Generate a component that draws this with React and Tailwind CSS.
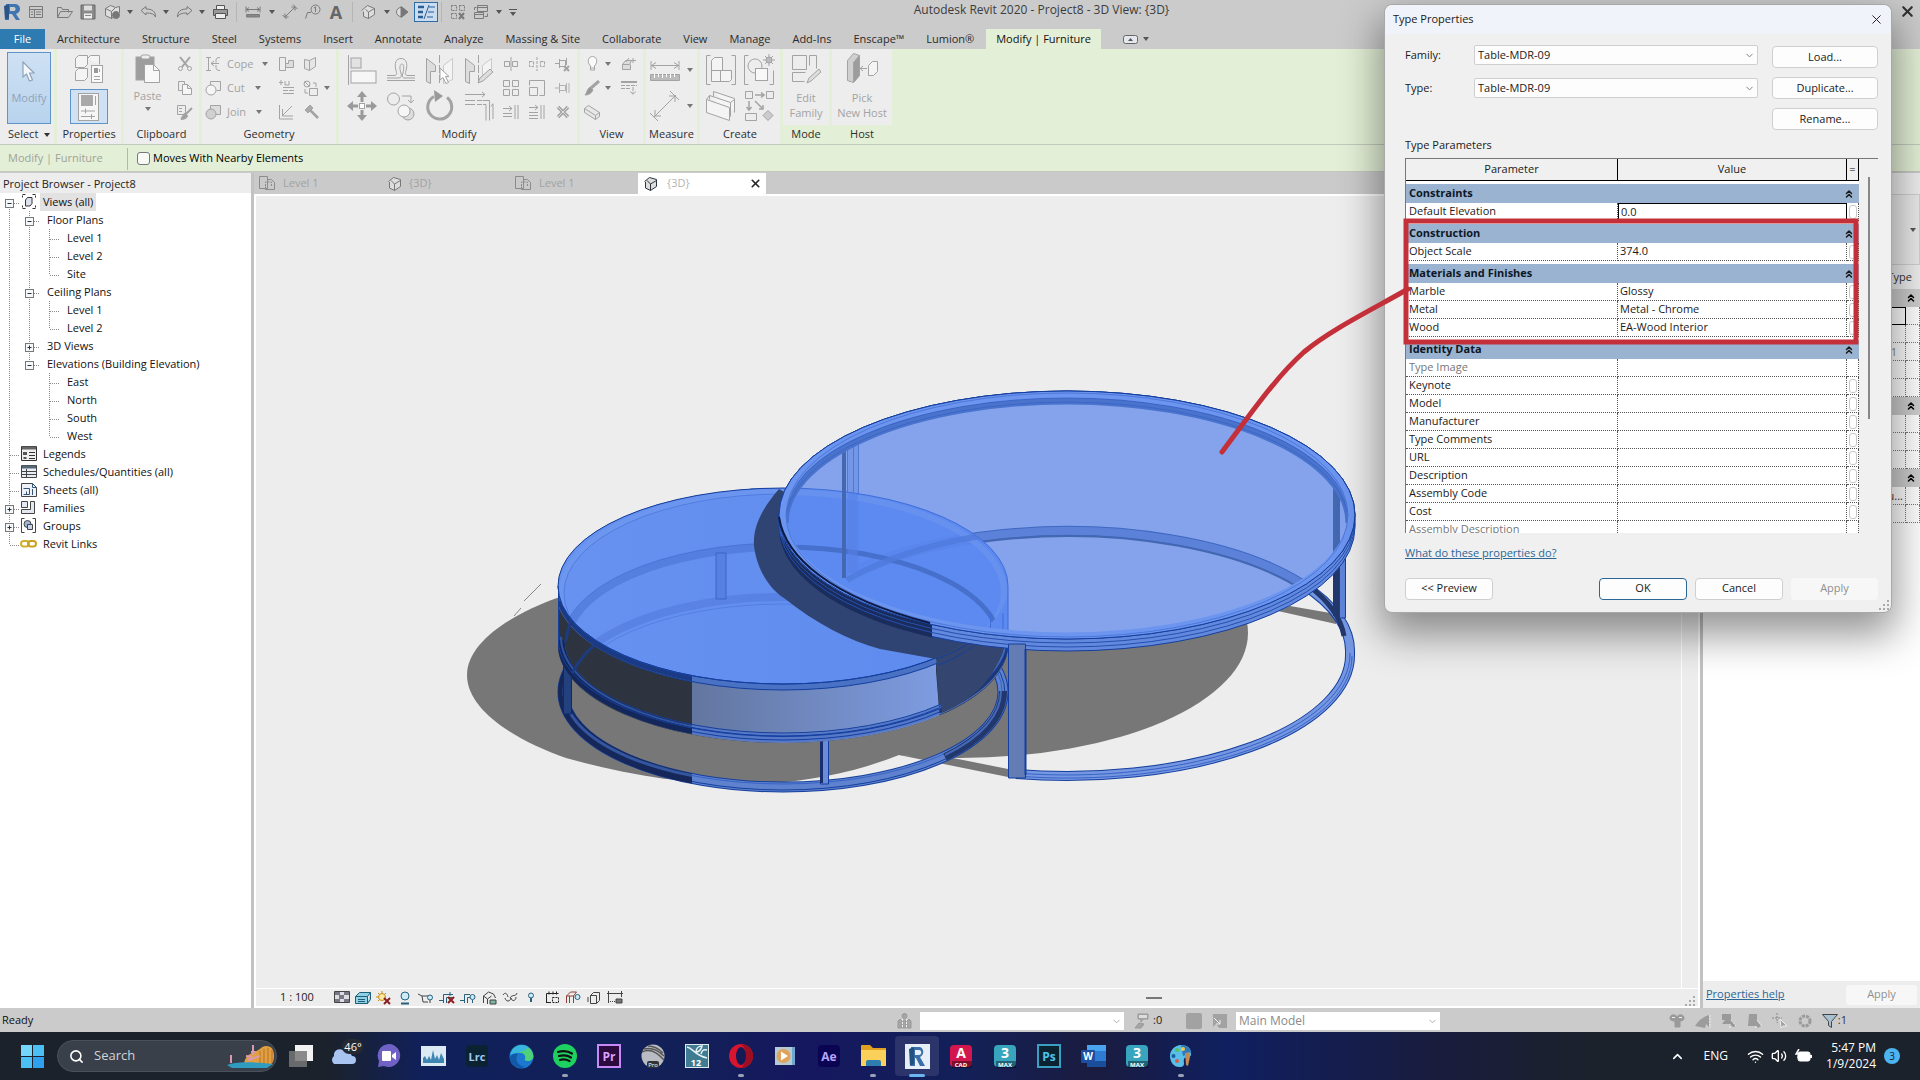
import { ChevronDown, ChevronUp, ChevronsUp, Search, X, Wifi, Volume2 } from "lucide-react";

/* ---------- small helpers ---------- */

function Svg({ w = 16, h = w, vw = w, vh = h, sw = 1, className = "", children }) {
  return (
    <svg
      width={w}
      height={h}
      viewBox={`0 0 ${vw} ${vh}`}
      fill="none"
      stroke="currentColor"
      strokeWidth={sw}
      className={`shrink-0 ${className}`}
      aria-hidden="true"
    >
      {children}
    </svg>
  );
}

function Caret({ className = "text-[#555]" }) {
  return (
    <Svg w={6} h={4} className={className}>
      <path d="M0 0h6L3 4z" fill="currentColor" stroke="none" />
    </Svg>
  );
}

/* ---------- quick access toolbar ---------- */

const qat = {
  props: (
    <Svg w={16}>
      <path d="M1.500 2.500h13v11h-13z M1.500 5.500h13 M6.500 5.500v8" />
      <path d="M3 8h2M3 10.500h2M8 8h5M8 10.500h5" />
    </Svg>
  ),
  open: (
    <Svg w={17} h={16}>
      <path d="M1.500 13.500v-10h4l1 2h6v3 M1.500 13.500l3-6h12l-4 6z" />
    </Svg>
  ),
  save: (
    <Svg w={16}>
      <path d="M1 1h14v14H1z" fill="#8b8b8b" stroke="#666" />
      <path d="M4 1.500h8v5H4z" fill="#ddd" stroke="none" />
      <path d="M4 9.500h8v5H4z" fill="#eee" stroke="none" />
      <path d="M5 11.500h6" stroke="#888" />
    </Svg>
  ),
  cube: (
    <Svg w={17} h={16}>
      <path d="M1.500 4.500l5-3 5 2 4-1v6l-8 6-6-3z M1.500 4.500l6 3v7 M7.500 7.500l4-4" fill="#ddd" />
      <circle cx="12" cy="11" r="3.500" fill="#777" />
    </Svg>
  ),
  undo: (
    <Svg w={17} h={14}>
      <path d="M1 5.500l5-4v2.500c6 0 9.500 2 9.500 8-1.500-3-4-4-9.500-4V10z" />
    </Svg>
  ),
  redo: (
    <Svg w={17} h={14}>
      <path d="M16 5.500l-5-4v2.500c-6 0-9.500 2-9.500 8 1.500-3 4-4 9.500-4V10z" />
    </Svg>
  ),
  print: (
    <Svg w={17} h={16}>
      <path d="M4.500 5.500v-4h8v4" fill="#eee" />
      <path d="M1.500 5.500h14v6h-14z" fill="#999" />
      <path d="M3.500 9.500h10v5h-10z" fill="#eee" />
    </Svg>
  ),
  dims: (
    <Svg w={16}>
      <path d="M1 5.500h14M1 2.500v6M15 2.500v6M4 3.500L1.500 5.500 4 7.500M12 3.500l2.500 2L12 7.500" />
      <path d="M1.500 10.500h13v2.500h-13z" fill="#888" />
    </Svg>
  ),
  diag: (
    <Svg w={16}>
      <path d="M3 13L13 3M3 9.500V13h3.500M9.500 3H13v3.500M.500 11l4 4M11 .500l4.500 4.500" />
    </Svg>
  ),
  tag: (
    <Svg w={16}>
      <circle cx="10.500" cy="5.500" r="4.500" />
      <path d="M10.500 3v5M9 4l1.500-1M.500 14.500l2-6h3.500" />
    </Svg>
  ),
  home: (
    <Svg w={16}>
      <path d="M1.500 6.500l6-5 7 3v6l-6 4-5-2v-5 M8.500 14.500V8l6-3.500 M8.500 8l-3-2.500" fill="#ddd" />
    </Svg>
  ),
  section: (
    <Svg w={14} h={16}>
      <circle cx="6" cy="8" r="4.500" fill="#ddd" />
      <path d="M6 2.500L13 8l-7 5.500z" fill="#777" />
    </Svg>
  ),
  thin: (
    <Svg w={18} h={16} className="text-[#2c5d94]">
      <path d="M1 3h6M1 8h5M1 13h5" strokeWidth="2.500" />
      <path d="M7 15L12 1M12 3h6M11 8h6M10 13h6" />
    </Svg>
  ),
  closeHidden: (
    <Svg w={15} h={16}>
      <path d="M1.500 1.500h5v5h-5zM1.500 9.500h5v5h-5zM9.500 1.500h5v5h-5z" strokeDasharray="2 1" />
      <path d="M9 9l5 6M14 9l-5 6" strokeWidth="2" />
    </Svg>
  ),
  switchWin: (
    <Svg w={17} h={16}>
      <path d="M4.500 1.500h10v6h-10zM4.500 3.500h10M1.500 8.500h9v6h-9zM1.500 10.500h9M1.500 6V3.500h2M14.500 9.500v3h-3" />
    </Svg>
  ),
};

function QatSep() {
  return <span className="h-5 w-px bg-[#b5b5b5]" />;
}

function TitleBar() {
  const btn = "flex h-5 items-center justify-center";
  return (
    <header className="flex h-[29px] items-start bg-[#cbcbcb] text-[#7a7a7a]">
      <div className="flex flex-[11] items-center pt-[2px]">
        <svg width="17" height="18" viewBox="0 0 17 18" className="ml-[4px]" aria-label="Revit">
          <path d="M2 1h8c4 0 6 2 6 5s-2 4-4 5l4 6h-4L8 11H5v6H2z" fill="#3f75b0" />
          <path d="M6 4h4c2 0 2 4 0 4H6z" fill="#cbcbcb" />
          <path d="M0 3l5-2v14l-4 2z" fill="#2b5588" />
        </svg>
        <button className={`${btn} ml-[7px] w-4`} aria-label="Properties">{qat.props}</button>
        <button className={`${btn} ml-[12px] w-[17px]`} aria-label="Open">{qat.open}</button>
        <button className={`${btn} ml-[7px] w-4`} aria-label="Save">{qat.save}</button>
        <button className={`${btn} ml-[6px] w-[32px] gap-[6px]`} aria-label="Sync">{qat.cube}<Caret /></button>
        <button className={`${btn} ml-[4px] w-[32px] gap-[6px]`} aria-label="Undo">{qat.undo}<Caret /></button>
        <button className={`${btn} ml-[4px] w-[32px] gap-[6px]`} aria-label="Redo">{qat.redo}<Caret /></button>
        <button className={`${btn} ml-[6px] mr-[7px] w-[17px] text-[#555]`} aria-label="Print">{qat.print}</button>
        <QatSep />
        <button className={`${btn} ml-[8px] w-[30px] gap-[8px]`} aria-label="Measure">{qat.dims}<Caret /></button>
        <button className={`${btn} ml-[7px] w-4`} aria-label="Aligned Dimension">{qat.diag}</button>
        <button className={`${btn} ml-[7px] w-4`} aria-label="Tag">{qat.tag}</button>
        <button className={`${btn} ml-[7px] mr-[8px] w-4 text-[18px] font-bold text-[#666]`} aria-label="Text">A</button>
        <QatSep />
        <button className={`${btn} ml-[7px] w-[30px] gap-[8px]`} aria-label="3D View">{qat.home}<Caret /></button>
        <button className={`${btn} ml-[4px] w-[16px]`} aria-label="Section">{qat.section}</button>
        <button className={`${btn} ml-[4px] mr-[3px] w-6 border border-[#2d6da8] bg-[#c9dcf0]`} aria-label="Thin Lines">{qat.thin}</button>
        <QatSep />
        <button className={`${btn} ml-[7px] w-4`} aria-label="Close Inactive">{qat.closeHidden}</button>
        <button className={`${btn} ml-[7px] w-[30px] gap-[6px]`} aria-label="Switch Windows">{qat.switchWin}<Caret /></button>
        <button className={`${btn} ml-[7px] w-2 flex-col gap-[2px]`} aria-label="Customize">
          <span className="h-px w-2 bg-[#555]" />
          <Caret />
        </button>
      </div>
      <h1 className="pt-[1px] text-[12px] leading-[18px] text-[#3c3c3c]">Autodesk Revit 2020 - Project8 - 3D View: {"{3D}"}</h1>
      <div className="flex flex-[9] justify-end pr-[3px] pt-[3px]">
        <button aria-label="Close" className="mr-[1px] text-[#333]">
          <X size={17} strokeWidth={3} />
        </button>
      </div>
    </header>
  );
}

const tabs = [
  "Architecture", "Structure", "Steel", "Systems", "Insert", "Annotate", "Analyze",
  "Massing & Site", "Collaborate", "View", "Manage", "Add-Ins", "Enscape™", "Lumion®",
];

function RibbonTabs() {
  return (
    <nav className="flex h-5 gap-[2px] bg-[#cbcbcb] text-[11px] leading-5 text-[#2a2a2a]">
      <button className="w-[45px] bg-[#2d7bb0] text-white">File</button>
      {tabs.map((t) => (
        <button key={t} className="px-[10px] whitespace-nowrap">{t}</button>
      ))}
      <button className="bg-[#e3efd6] px-[10px] whitespace-nowrap text-[#111]">Modify | Furniture</button>
      <button className="ml-[20px] flex items-center gap-[5px]" aria-label="Minimize ribbon">
        <Svg w={15} h={9} className="text-[#666]">
          <rect x=".5" y=".5" width="14" height="8" rx="2" fill="#e4e8ee" />
          <path d="M5 6l2.500-3L10 6z" fill="#555" stroke="none" />
        </Svg>
        <Caret />
      </button>
    </nav>
  );
}

/* ---------- ribbon ---------- */

const big = {
  cursor: (
    <Svg w={14} h={22} sw={1.2}>
      <path d="M1 1v15l3.500-3 3 7 3-1-3-7H12z" fill="#f4f8fc" />
    </Svg>
  ),
  typeProps: (
    <Svg w={30} h={30}>
      <path d="M1.500 4.500l3-3h9v9l-3 3h-9z M13.500 4.500l3-3h9v9 M1.500 17.500l3-3h9 M1.500 17.500v9h9l3-3v-9 M1.500 4.500v9" fill="#f4f4f4" />
      <rect x="17.500" y="11.500" width="11" height="17" fill="#fafafa" />
      <path d="M20 14h4v5h-4z" fill="#999" stroke="none" />
      <path d="M25.500 15v3M20 22.500h6M20 25.500h6" />
    </Svg>
  ),
  palette: (
    <Svg w={22} h={28}>
      <rect x=".5" y=".5" width="20" height="27" fill="#f6f6f6" />
      <path d="M3 2h12v11H3z" fill="#a9a9a9" stroke="none" />
      <path d="M17.500 3v9M3 18h14M3 23.500h14M7.500 15.500v5M13.500 21v5" />
    </Svg>
  ),
  paste: (
    <Svg w={26} h={30}>
      <rect x="1" y="3" width="18" height="23" fill="#9d9d9d" />
      <rect x="6" y="1" width="9" height="4" rx="2" fill="#eee" />
      <path d="M9.500 10.500h9l6 6v12h-15z" fill="#f8f8f8" />
      <path d="M18.500 10.500v6h6" />
    </Svg>
  ),
  align: (
    <Svg w={30}>
      <path d="M1.500 0v30" />
      <rect x="4" y="3" width="10" height="10" fill="#e2e2e2" />
      <rect x="4" y="16" width="25" height="12" fill="#f6f6f6" />
    </Svg>
  ),
  offset: (
    <Svg w={30}>
      <path d="M1 25.500h28M1 20.500h7c3 0 3-2 2-5C8 8 10 3.500 15 3.500s7 4.500 5 12c-1 3-1 5 2 5h7" />
      <path d="M1 23h12c2 0 3-2 2-5-2-5-1-9 1-9s2 4 1 9c-1 3-1 5 2 5h10" />
    </Svg>
  ),
  mirrorPick: (
    <Svg w={30}>
      <path d="M1.500 3.500l9 7v6l-5 0v12l-4-2z" fill="#ddd" />
      <path d="M27.500 3.500l-9 7v18l9-4z" strokeOpacity=".5" fill="#f4f4f4" />
      <path d="M14.500 0v30" strokeDasharray="8 2" />
      <path d="M15 13v12l3-2.500 3 6 2.500-1-3-6H24z" fill="#fff" />
    </Svg>
  ),
  mirrorDraw: (
    <Svg w={30}>
      <path d="M1.500 3.500l9 7v6l-5 0v12l-4-2z" fill="#ddd" />
      <path d="M27.500 3.500l-9 7v10l9-4z" strokeOpacity=".5" fill="#f4f4f4" />
      <path d="M14.500 0v30" strokeDasharray="8 2" />
      <path d="M14 28l2-5 10-9 3 3-10 9z" fill="#ddd" />
    </Svg>
  ),
  move: (
    <Svg w={30}>
      <path d="M15 0l5 6h-3.500v5h-3V6H10zM15 30l5-6h-3.500v-5h-3v5H10zM0 15l6-5v3.500h5v3H6V20zM30 15l-6-5v3.500h-5v3h5V20z" fill="#9a9a9a" stroke="none" />
      <rect x="12.500" y="12.500" width="5" height="5" fill="#fff" />
    </Svg>
  ),
  copy: (
    <Svg w={30}>
      <circle cx="7.500" cy="8" r="6" />
      <circle cx="22" cy="23" r="6" fill="#ddd" />
      <circle cx="18" cy="20" r="6" fill="#f6f6f6" />
      <path d="M16 5h9v6M22 9l3 3 3-3" />
    </Svg>
  ),
  rotate: (
    <Svg w={30} h={32}>
      <path d="M9 6.500A12 12 0 1 0 22 7.500" strokeWidth="3" />
      <path d="M9 0l9 6-8 6z" fill="#9a9a9a" stroke="none" />
    </Svg>
  ),
  trim: (
    <Svg w={30}>
      <path d="M1 9.500h10M13 9.500h5M1 13.500h10M13 13.500h5M1 3.500h20M18 1l3 2.500-3 2.500" />
      <path d="M18.500 9.500h7M22 13.500v16M25.500 9.500v20M19 13.500h3M29 28V13M27 15.500l2-3" />
    </Svg>
  ),
  measure: (
    <Svg w={30} h={26}>
      <path d="M1 8.500h28M1 4v9M29 4v9M6 5.500L1.500 8.500 6 11.500M24 5.500l4.500 3-4.500 3" />
      <path d="M.500 17.500h29v6H.500z" fill="#bbb" />
      <path d="M4.500 17v4M8.500 17v3M12.500 17v4M16.500 17v3M20.500 17v4M24.500 17v3" stroke="#fff" />
    </Svg>
  ),
  aligned: (
    <Svg w={30}>
      <path d="M4 26L26 4M0 22l8 8M20 0l9 9M5 19v6h6M19 5h6v6" />
    </Svg>
  ),
  group: (
    <Svg w={32}>
      <path d="M5.500 1.500h-4v29h4M26.500 1.500h4v29h-4" />
      <path d="M6.500 6.500l3-3h8v13h9v9l-2 2h-18z M6.500 16.500h11M15.500 16.500v11" fill="#f4f4f4" />
    </Svg>
  ),
  groupNew: (
    <Svg w={32}>
      <path d="M5.500 1.500h-4v29h4M26.500 30.500h4v-14" />
      <circle cx="12" cy="12" r="7" />
      <rect x="12.500" y="14.500" width="12" height="12" fill="#f8f8f8" />
      <path d="M26 0v12M20 6h12M22 2l8 8M30 2l-8 8" />
      <circle cx="26" cy="6" r="3" fill="#bbb" />
    </Svg>
  ),
  assembly: (
    <Svg w={32}>
      <path d="M8.500 1.500l21 7v14" fill="#f4f4f4" />
      <path d="M4.500 5.500l21 7v14M1.500 9.500l23 8v13l-23-8zM1.500 9.500l3-4v4M8.500 1.500v5M25.500 12.500l4-3" fill="#f4f4f4" />
    </Svg>
  ),
  parts: (
    <Svg w={30} h={32}>
      <path d="M1.500 1.500h7v7h-7zM22.500 1.500h7v7h-7zM1.500 23.500h11v7h-11z" />
      <path d="M24 20.500l5 5-5 5-5-5z" fill="#ccc" />
      <path d="M11 5h9M17 2.500l3 2.500-3 2.500M5 11v9M2.500 17L5 20l2.500-3M11 11l8 8M19 15v4h-4" strokeWidth="1.500" />
    </Svg>
  ),
  editFamily: (
    <Svg w={30}>
      <path d="M1.500 1.500h14v14h-14zM18.500 1.500h7v13M1.500 18.500h13M1.500 18.500v9h12M18.500 1.500v10" />
      <path d="M16 29l2-5 10-9 2 3-10 9z" fill="#ddd" />
    </Svg>
  ),
  pickHost: (
    <Svg w={32}>
      <path d="M1.500 8.500l6-7 6 2v20l-6 7-6-2z" fill="#d0d0d0" />
      <path d="M7.500 10.500l6-7v20l-6 7z" fill="#9c9c9c" />
      <path d="M14 16.500h7M17 14l-3 2.500 3 2.500" />
      <path d="M22.500 13.500l4-4h5v10l-4 4h-5z" fill="#f4f4f4" />
    </Svg>
  ),
};

const sm = {
  cut: <Svg w={16}><path d="M3 1l8 10M13 1L5 11" strokeWidth="2" /><circle cx="3.500" cy="12.500" r="2" /><circle cx="12.500" cy="12.500" r="2" /></Svg>,
  copy: <Svg w={16}><path d="M1.500 1.500h6v9h-6z" /><path d="M5.500 4.500h5l4 4v6h-9z M10.500 4.500v4h4" fill="#f6f6f6" /></Svg>,
  brush: <Svg w={16}><path d="M.500 1.500h8v9h-8zM2 4.500h3M2 7.500h3" /><path d="M15 4l-7 7M8 10l2 2c-1 3-4 3-6 3 2-1 2-4 4-5z" fill="#999" strokeWidth="2" /></Svg>,
  cope: <Svg w={16}><path d="M1 1.500h5M1 14.500h5M3.500 1.500v13M15 1.500c-3 0-4 1-4 3v2M15 14.500c-3 0-4-1-4-3V9M14 7.500H6M9 5L6 7.500 9 10" /></Svg>,
  cutGeo: <Svg w={16}><path d="M5.500 5V1.500h10v9h-4" /><circle cx="6" cy="10" r="5" fill="#f6f6f6" /></Svg>,
  join: <Svg w={16}><path d="M5.500 1.500h10v9h-10z" fill="#ddd" /><circle cx="6" cy="10" r="5" fill="#d0d0d0" /></Svg>,
  splitFace: <Svg w={16}><path d="M1.500 1.500h6v13h-6z" /><path d="M15.500 4.500h-5v3h-3v4h8z" fill="#ddd" /></Svg>,
  paint: <Svg w={16}><path d="M1.500 3.500l5 1 6-3v9l-6 4-5-2z M6.500 4.500v10" fill="#e6e6e6" /></Svg>,
  wallJoin: <Svg w={16}><path d="M5 7.500h11M5 10.500h5M11 10.500h5M5 13.500h11M1 2.500h4M3 0v5M7 1v4h4V1" /></Svg>,
  demolish: <Svg w={16}><circle cx="4" cy="4" r="3" /><path d="M1.500 1.500l5 5M10 3h3v4M6.500 8.500h8v7h-8zM2 9v4h3" /></Svg>,
  beam: <Svg w={16}><path d="M1.500 1v14H15M4.500 5v7H15M5 11l9-9" /></Svg>,
  hammer: <Svg w={16}><path d="M2 6l5-5 3 3-5 5z" fill="#aaa" /><path d="M7.500 6.500L15 14" strokeWidth="2.500" /></Svg>,
  splitEl: <Svg w={16}><path d="M1.500 5.500h5v5h-5zM9.500 5.500h5v5h-5zM8 1v14" /></Svg>,
  splitGap: <Svg w={16}><path d="M.500 5.500h4v5h-4zM11.500 5.500h4v5h-4zM8 1v14" strokeDasharray="3 1" /></Svg>,
  unpin: <Svg w={16}><path d="M0 7.500h4M4.500 3v9M4.500 4.500h6v6h-6M11.500 2v7" /><path d="M9 10l5 5M14 10l-5 5" strokeWidth="2" /></Svg>,
  array: <Svg w={16}><path d="M.500.500h6v6h-6zM9.500.500h6v6h-6zM.500 9.500h6v6h-6zM9.500 9.500h6v6h-6z" /></Svg>,
  scale: <Svg w={16}><path d="M.500.500h15v15h-5M.500.500v5" /><path d="M.500 7.500h8v8h-8z" fill="#eee" /></Svg>,
  pin: <Svg w={16}><path d="M0 8h4M4.500 3v10M4.500 5.500h6v5h-6M11.500 3v10M14 3v10" strokeOpacity=".8" /></Svg>,
  trimOne: <Svg w={16}><path d="M0 4.500h9M6 2l3 2.500L6 7M0 9.500h9M0 12.500h9M12 1v14M15 1v14" /></Svg>,
  trimMulti: <Svg w={16}><path d="M0 3.500h9M6 1l3 2.500L6 6M0 8.500h9M0 11.500h9M0 14.500h9M12 1v14M15 1v14" /></Svg>,
  del: <Svg w={14}><path d="M2 2l10 10M12 2L2 12" strokeWidth="3.500" /><path d="M2 2l10 10M12 2L2 12" stroke="#ddd" /></Svg>,
  bulb: <Svg w={16}><path d="M6.500 10C2 5 5 .500 8.500 .500S15 5 10.500 10v4h-4zM6.500 12h4" fill="#fafafa" /></Svg>,
  section: <Svg w={16}><path d="M1.500 8.500l3-4h6l-2 4zM1.500 8.500v5h8v-5M12 2v5M9 4.500h6M5 6l3-4" fill="#ddd" /></Svg>,
  brush2: <Svg w={16}><path d="M15 1L7 8" strokeWidth="3" /><path d="M6 7l3 3c-2 4-5 5-8 5 2-2 2-6 5-8z" fill="#999" /></Svg>,
  lines: <Svg w={16}><path d="M0 2h16" strokeWidth="2" /><path d="M0 5.500h16M0 8.500h9M12 7v7M9.500 11.500L12 14.500l2.500-3" strokeDasharray="4 1" /></Svg>,
  box: <Svg w={16}><path d="M.500 4.500l4-3 11 7v4l-4 3-11-7zM.500 4.500l11 7v4M11.500 11.500l4-3" fill="#e8e8e8" /></Svg>,
};

function Tool({ label, children, className = "" }) {
  return (
    <button aria-label={label} className={`flex items-center justify-center ${className}`}>
      {children}
    </button>
  );
}

function Panel({ title, className = "", green, children }) {
  return (
    <section className={`flex flex-col bg-[#ededed] ${className}`}>
      <div className="flex h-[76px] items-start justify-center pt-[3px]">{children}</div>
      <h2 className={`flex h-[19px] items-center justify-center text-[11px] text-[#2e2e2e] ${green ? "bg-[#e3efd6]" : ""}`}>{title}</h2>
    </section>
  );
}

function SmallGrid({ items, className }) {
  return (
    <div className={`grid grid-rows-3 ${className}`}>
      {items.map((row, i) => (
        <Tool key={i} label={row[0]} className="h-6 gap-[5px]">
          {row[1]}
          {row[2] && <Caret className="text-[#777]" />}
        </Tool>
      ))}
    </div>
  );
}

function Ribbon() {
  return (
    <div className="flex h-[96px] gap-[3px] border-b border-[#c3c9bd] bg-[#e3efd6] text-[#a3a3a3]">
      <Panel title={<>Select&nbsp;&nbsp;<Caret className="text-[#333]" /></>} className="w-[54px] pl-[4px]">
        <button className="flex h-[72px] w-[44px] flex-col items-center border border-[#5e94c7] bg-gradient-to-b from-[#cfe1f3] to-[#b8d3ee] pt-[8px] text-[11px] text-[#8fa3b8]">
          {big.cursor}
          <span className="mt-[7px]">Modify</span>
        </button>
      </Panel>
      <Panel title="Properties" className="w-[64px]">
        <div className="flex flex-col items-center gap-[4px]">
          <Tool label="Type Properties" className="h-[33px]">{big.typeProps}</Tool>
          <Tool label="Properties" className="h-[35px] w-[38px] border border-[#5e94c7] bg-[#cfe1f3]">{big.palette}</Tool>
        </div>
      </Panel>
      <Panel title="Clipboard" className="w-[75px]">
        <button className="flex w-[46px] flex-col items-center pt-[2px] text-[11px] text-[#a3a3a3]">
          {big.paste}
          <span className="mt-[4px]">Paste</span>
          <Caret className="mt-[2px] text-[#777]" />
        </button>
        <SmallGrid className="w-[28px]" items={[["Cut", sm.cut], ["Copy", sm.copy], ["Match Type", sm.brush]]} />
      </Panel>
      <Panel title="Geometry" className="w-[134px]">
        <div className="flex w-[68px] flex-col text-[11px]">
          <button className="flex h-6 items-center gap-[6px]">{sm.cope}<span>Cope</span><Caret className="ml-[3px] text-[#777]" /></button>
          <button className="flex h-6 items-center gap-[6px]">{sm.cutGeo}<span>Cut</span><Caret className="ml-[4px] text-[#777]" /></button>
          <button className="flex h-6 items-center gap-[6px]">{sm.join}<span>Join</span><Caret className="ml-[4px] text-[#777]" /></button>
        </div>
        <SmallGrid className="w-[26px]" items={[["Split Face", sm.splitFace], ["Wall Joins", sm.wallJoin], ["Beam Joins", sm.beam]]} />
        <div className="flex w-[34px] flex-col">
          <Tool label="Paint" className="h-6 justify-start pl-[4px]">{sm.paint}</Tool>
          <Tool label="Demolish" className="h-6 justify-start gap-[5px] pl-[4px]">{sm.demolish}<Caret className="text-[#777]" /></Tool>
          <Tool label="Hammer" className="h-6 justify-start pl-[4px]">{sm.hammer}</Tool>
        </div>
      </Panel>
      <Panel title="Modify" className="w-[238px] pl-[2px]">
        <div className="grid grid-cols-[39px_39px_39px_39px]">
          {[["Align", big.align], ["Offset", big.offset], ["Mirror Pick", big.mirrorPick], ["Mirror Draw", big.mirrorDraw], ["Move", big.move], ["Copy", big.copy], ["Rotate", big.rotate], ["Trim", big.trim]].map(([l, ic]) => (
            <Tool key={l} label={l} className="h-[36px]">{ic}</Tool>
          ))}
        </div>
        <div className="grid grid-cols-[26px_26px_26px]">
          {[["Split", sm.splitEl], ["Split Gap", sm.splitGap], ["Unpin", sm.unpin], ["Array", sm.array], ["Scale", sm.scale], ["Pin", sm.pin], ["Trim Single", sm.trimOne], ["Trim Multiple", sm.trimMulti], ["Delete", sm.del]].map(([l, ic]) => (
            <Tool key={l} label={l} className="h-6">{ic}</Tool>
          ))}
        </div>
      </Panel>
      <Panel title="View" className="w-[63px]">
        <SmallGrid className="w-[34px] justify-items-start pl-[2px]" items={[["Hide", sm.bulb, true], ["Override", sm.brush2, true], ["Displace", sm.box]]} />
        <SmallGrid className="w-[26px]" items={[["Box", sm.section], ["Linework", sm.lines]]} />
      </Panel>
      <Panel title="Measure" className="w-[51px]">
        <div className="flex flex-col">
          <Tool label="Measure" className="h-[36px] gap-[7px]">{big.measure}<Caret className="text-[#777]" /></Tool>
          <Tool label="Dimension" className="h-[36px] gap-[7px]">{big.aligned}<Caret className="text-[#777]" /></Tool>
        </div>
      </Panel>
      <Panel title="Create" className="w-[80px]">
        <div className="grid grid-cols-[38px_38px]">
          {[["Create Group", big.group], ["Create Similar", big.groupNew], ["Assembly", big.assembly], ["Parts", big.parts]].map(([l, ic]) => (
            <Tool key={l} label={l} className="h-[36px]">{ic}</Tool>
          ))}
        </div>
      </Panel>
      <Panel title="Mode" green className="w-[46px]">
        <button className="flex flex-col items-center pt-[2px] text-[11px] leading-[15px]">
          {big.editFamily}
          <span className="mt-[6px]">Edit</span>
          <span>Family</span>
        </button>
      </Panel>
      <Panel title="Host" green className="w-[60px]">
        <button className="flex flex-col items-center text-[11px] leading-[15px] whitespace-nowrap">
          {big.pickHost}
          <span className="mt-[6px]">Pick</span>
          <span>New Host</span>
        </button>
      </Panel>
    </div>
  );
}

function OptionsBar() {
  return (
    <div className="flex h-[27px] items-center border-b border-[#c3c9bd] bg-[#e3efd6] pt-px text-[11px]">
      <span className="w-[127px] pl-[8px] text-[#a0a39c]">Modify | Furniture</span>
      <span className="h-[22px] w-px bg-[#b3b8ad]" />
      <label className="ml-[9px] flex items-center gap-[3px] text-black">
        <input type="checkbox" className="h-[13px] w-[13px] appearance-none rounded-[3px] border border-[#777] bg-[#f8fbf5]" />
        Moves With Nearby Elements
      </label>
    </div>
  );
}

/* ---------- project browser ---------- */

const treeIcons = {
  views: <Svg w={16} className="text-[#333]"><path d="M4.500.500h-3v3M11.500.500h3v3M4.500 14.500h-3v-3M11.500 14.500h3v-3" strokeDasharray="3 1" /><path d="M4.500 6l2-2.500H11v6L9 12H4.500z" fill="#dde3ee" /></Svg>,
  legends: <Svg w={16} className="text-[#333]"><path d="M.500.500h15v14H.500z" fill="#eee" /><path d="M1 2h14" strokeWidth="3" stroke="#666" /><path d="M2 6h4v3H2zM2.500 11h3v2h-3z" fill="#555" stroke="none" /><path d="M8 6.500h6M8 9.500h6M8 12.500h6" /></Svg>,
  schedules: <Svg w={16} h={14} className="text-[#444]"><path d="M.500.500h15v12H.500z" fill="#e8edf5" /><path d="M1 2h14" strokeWidth="3" stroke="#567" /><path d="M1 6.500h14M1 9.500h14M5.500 4v9" /></Svg>,
  sheets: <Svg w={16} h={14} className="text-[#444]"><path d="M.500.500h11l4 4v9H.500z" fill="#eef2f8" /><path d="M11.500.500v4h4M2.500 5.500h6v6h-6M5.500 8.500v3M11.500 6v6" stroke="#357" /></Svg>,
  families: <Svg w={16} className="text-[#444]"><path d="M.500 1.500h6v6h-6zM9.500 1.500h4v12h-13v-4h9z" fill="#e4e8f2" /></Svg>,
  groups: <Svg w={16} className="text-[#444]"><path d="M3.500.500h-3v14h3M11.500.500h3v14h-3" /><circle cx="6.500" cy="6" r="3.500" fill="#9fb4d8" /><path d="M6.500 6.500h5v5h-5z" fill="#c6d3ea" /></Svg>,
  links: <Svg w={17} h={8} className="text-[#a8861a]"><rect x="1" y="1" width="8" height="5.500" rx="2.700" strokeWidth="2" stroke="#d4b02c" /><rect x="8" y="1" width="8" height="5.500" rx="2.700" strokeWidth="2" stroke="#c9a21f" /></Svg>,
};

// guide cells: v = line, t = branch, l = last branch, m/e = minus (e ends the line), p = plus, _ = blank
const tree = [
  ["f", "Views (all)", "views", true],
  ["vm", "Floor Plans"],
  ["vvt", "Level 1"],
  ["vvt", "Level 2"],
  ["vvl", "Site"],
  ["vm", "Ceiling Plans"],
  ["vvt", "Level 1"],
  ["vvl", "Level 2"],
  ["vp", "3D Views"],
  ["ve", "Elevations (Building Elevation)"],
  ["v_t", "East"],
  ["v_t", "North"],
  ["v_t", "South"],
  ["v_l", "West"],
  ["t", "Legends", "legends"],
  ["t", "Schedules/Quantities (all)", "schedules"],
  ["t", "Sheets (all)", "sheets"],
  ["p", "Families", "families"],
  ["p", "Groups", "groups"],
  ["l", "Revit Links", "links"],
];

function Guide({ type }) {
  const box = "fmep".includes(type);
  return (
    <Svg w={20} h={18} className="text-[#8a8a8a]">
      {"vtmepl".includes(type) && <path d="M9.500 0v10" strokeDasharray="1 1" />}
      {"vtmpf".includes(type) && <path d="M9.500 10v8" strokeDasharray="1 1" />}
      {!"v_".includes(type) && <path d="M10 10.500h10" strokeDasharray="1 1" />}
      {box && <rect x="5.500" y="6.500" width="8" height="8" fill="#f6f7f9" stroke="#777" />}
      {box && <path d="M7.500 10.500h4" stroke="#234" />}
      {type === "p" && <path d="M9.500 8.500v4" stroke="#234" />}
    </Svg>
  );
}

function ProjectBrowser() {
  return (
    <aside className="flex w-[251px] shrink-0 flex-col bg-[#ededed]">
      <h2 className="h-[20px] pl-[3px] text-[11px] leading-[21px] text-[#222]">Project Browser - Project8</h2>
      <ul className="flex-1 bg-white text-[11px] text-[#111]">
        {tree.map(([guides, label, icon, selected], i) => (
          <li key={i} className="flex h-[18px] items-center">
            {guides.split("").map((g, j) => (
              <Guide key={j} type={g} />
            ))}
            {icon && <span className="flex w-[17px] justify-center">{treeIcons[icon]}</span>}
            <span className={`h-[18px] px-[3px] leading-[18px] whitespace-nowrap ${icon ? "ml-[3px]" : "ml-[4px]"} ${selected ? "bg-[#e2e2e2]" : ""}`}>{label}</span>
          </li>
        ))}
      </ul>
    </aside>
  );
}

/* ---------- 3D view ---------- */

function ViewTabs() {
  const plan = (
    <Svg w={17} h={15} className="text-[#8c8c8c]">
      <path d="M.500.500h8v12h-8zM8.500 3.500h4l3 3v7h-9v-3" />
      <path d="M6.500 10V6h6v5" strokeDasharray="2 1" />
    </Svg>
  );
  const home = (
    <Svg w={15} className="text-[#777]">
      <path d="M1.500 5.500l5-4 7 2v7l-6 4-5-2.500V6" fill="#ddd" />
      <path d="M7.500 14.500V8l6-3.500M7.500 8L4 4.500" />
    </Svg>
  );
  return (
    <div className="flex h-[21px] items-center bg-[#cacaca] text-[11px] text-[#a2a2a2]">
      {[[plan, "Level 1"], [home, "{3D}"], [plan, "Level 1"]].map(([ic, t], i) => (
        <button key={i} className="flex h-full w-[128px] items-center gap-[7px] pl-[5px]">
          {ic}
          {t}
        </button>
      ))}
      <div className="flex h-full w-[128px] items-center bg-white pl-[5px]">
        <span className="[&_svg]:text-[#2c3440]">{home}</span>
        <button className="ml-[9px] flex-1 text-left text-[#b4b4b4]">{"{3D}"}</button>
        <button aria-label="Close view" className="pr-[4px] text-[#222]"><X size={13} strokeWidth={3} /></button>
      </div>
    </div>
  );
}

function Model() {
  const line = "#143f9e";
  const soft = "#3763c6";
  return (
    <svg width="1424" height="794" viewBox="256 195 1424 794" className="shrink-0" role="img" aria-label="3D view of nested coffee tables">
      <defs>
        <linearGradient id="wall" x1="692" x2="940" y1="0" y2="0" gradientUnits="userSpaceOnUse">
          <stop offset="0" stopColor="#62769f" />
          <stop offset="1" stopColor="#7e9ce2" />
        </linearGradient>
        <linearGradient id="smallTop" x1="560" x2="1000" y1="0" y2="0" gradientUnits="userSpaceOnUse">
          <stop offset="0" stopColor="#6792f0" />
          <stop offset="1" stopColor="#5d8aee" />
        </linearGradient>
        <clipPath id="wallMid"><path d="M692 480H936v190l6 75v60H692z" /></clipPath>
        <clipPath id="wallRight"><path d="M936 480h80v330h-74v-60l-6-90z" /></clipPath>
        <clipPath id="leftDark"><path d="M540 600H692V800H540z" /></clipPath>
        <clipPath id="smallClip"><path d="M558 585a225 98 0 0 1 450 0v59a225 98 0 0 1-450 0z" /></clipPath>
        <clipPath id="glassClip"><ellipse cx="1067" cy="514" rx="288" ry="124" /></clipPath>
        <clipPath id="topClip"><ellipse cx="783" cy="585" rx="225" ry="98" /></clipPath>
        <clipPath id="rimDark"><path d="M770 520V660H932V622L800 560z" /></clipPath>
      </defs>

      {/* shadows on the ground */}
      <g fill="#777777">
        <ellipse cx="960" cy="632" rx="288" ry="125" />
        <path d="M557 597C515 612 467 640 467 674c0 36 50 66 99 83 60 17 120 26 174 26 66 0 115-12 159-29l40-100-200-80z" />
        <path d="M899 754l109 22v-8l-60-12z" />
        <path d="M1278 610l12-5 46 8v10z" />
      </g>
      <path d="M541 583l-17 17M521 607l-7 8" stroke="#888" />

      {/* big table base ring and legs */}
      <g fill="none">
        <path d="M856 570A283 120 0 0 1 1350 652A283 121 0 0 1 1016 773" stroke={line} strokeWidth="10" />
        <path d="M856 570A283 120 0 0 1 1350 652A283 121 0 0 1 1016 773" stroke="#7597e2" strokeWidth="8" />
        <path d="M1309 585A283 121 0 0 1 1344 635" stroke="#22376c" strokeWidth="5" />
        <path d="M1350 652A283 121 0 0 1 1016 772" stroke={soft} />
        <path d="M1352 655A284 122 0 0 1 1016 775" stroke={soft} />
      </g>
      <path d="M1333 487h6v128h-6z" fill="#22376c" />
      <path d="M1339.500 487h6v130h-6z" fill="#5f84d8" stroke={line} />

      {/* small table base ring */}
      <g fill="none">
        <ellipse cx="783" cy="691" rx="220" ry="95" stroke={line} strokeWidth="11" />
        <ellipse cx="783" cy="691" rx="220" ry="95" stroke="#5f82ce" strokeWidth="9" />
        <ellipse cx="783" cy="690" rx="219" ry="93" stroke={soft} />
        <ellipse cx="783" cy="692" rx="222" ry="97" stroke={line} />
        <g clipPath="url(#leftDark)">
          <ellipse cx="783" cy="691" rx="220" ry="95" stroke="#16275a" strokeWidth="10" />
          <ellipse cx="783" cy="690" rx="219" ry="93" stroke="#34569f" strokeWidth="3" />
        </g>
        <path d="M1003 690A220 96 0 0 1 945 756" stroke="#22376c" strokeWidth="8" />
        <path d="M1001 690A219 95 0 0 1 945 754" stroke="#4668b4" strokeWidth="2" />
      </g>
      <path d="M563.500 665h8v48h-8z" fill="#23407f" stroke="#0f2a6c" />
      <path d="M820.500 737h8v46h-8z" fill="#6a8cda" stroke={line} />
      <path d="M821.500 738v44" stroke="#182f6e" strokeWidth="3" />

      {/* small table lower frame and wall */}
      <g clipPath="url(#smallClip)">
        <path d="M550 480h470v270H550z" fill="#2d3440" />
        <g clipPath="url(#wallMid)"><path d="M690 480h260v270H690z" fill="url(#wall)" /></g>
        <g clipPath="url(#wallRight)"><path d="M930 480h90v270h-90z" fill="#34466f" /></g>
        <g fill="none">
          <path d="M560 639a223 98 0 0 0 446 0" stroke="#5578c8" strokeWidth="9" />
          <path d="M560 634a223 98 0 0 0 446 0M560 637a223 98 0 0 0 446 0M559 641a224 98 0 0 0 448 0" stroke={line} />
          <g clipPath="url(#leftDark)">
            <path d="M560 639a223 98 0 0 0 446 0" stroke="#14275a" strokeWidth="9" />
            <path d="M561 636a222 98 0 0 0 444 0" stroke="#2f549f" strokeWidth="2" />
          </g>
          <g clipPath="url(#wallRight)">
            <path d="M560 639a223 98 0 0 0 446 0" stroke="#1e3774" strokeWidth="7" />
            <path d="M560 637a223 98 0 0 0 446 0" stroke="#4468ba" strokeWidth="2" />
          </g>
          <path d="M558 588a225 98 0 0 0 450 0" stroke="#4a72c4" strokeWidth="6" />
          <path d="M558 591a225 98 0 0 0 450 0" stroke={line} />
          <g clipPath="url(#leftDark)"><path d="M558 588a225 98 0 0 0 450 0" stroke="#1b3a84" strokeWidth="5" /></g>
          <path d="M566 640c2-18 10-35 28-50M572 672c8-14 16-24 28-32" stroke="#1d3b80" strokeWidth="3" />
        </g>
      </g>
      <path d="M558.500 585v59a225 98 0 0 0 449 0v-59" fill="none" stroke={line} />

      {/* small table top */}
      <ellipse cx="783" cy="585" rx="225" ry="98" fill="url(#smallTop)" stroke={line} />
      <g clipPath="url(#topClip)" fill="none">
        <ellipse cx="783" cy="591" rx="221" ry="100" stroke="#7199ee" strokeWidth="6" strokeOpacity=".6" />
        <ellipse cx="783" cy="592" rx="219" ry="99" stroke="#4975dc" strokeOpacity=".8" />
        <ellipse cx="783" cy="643" rx="217" ry="97" stroke="#4b74d4" strokeWidth="8" strokeOpacity=".6" />
        <ellipse cx="783" cy="642" rx="221" ry="100" stroke="#3c68cc" strokeOpacity=".5" />
        <ellipse cx="783" cy="693" rx="219" ry="97" stroke="#4b74d4" strokeWidth="8" strokeOpacity=".45" />
        <ellipse cx="783" cy="696" rx="214" ry="93" stroke="#3c68cc" strokeOpacity=".4" />
        <path d="M716 552h10v46h-10z" fill="#5680e2" stroke="#3a66c8" />
      </g>
      <path d="M558 585a225 98 0 0 0 450 0" fill="none" stroke={line} />

      {/* shadow cast on the small top */}
      <path d="M779 488C758 512 753 530 754 545C758 575 775 592 784 597C815 622 850 640 880 648L936 658L970 640L1000 600L800 500z" fill="#2f4472" />
      <path d="M936 657l30-17 41-10c-2 20-10 38-24 54-10 12-24 20-41 28z" fill="#34466f" />
      <path d="M936 658c12-4 24-10 34-16M938 664c14-5 26-12 36-19M1007.500 585v62" stroke={line} fill="none" />

      {/* big table top: rim, glass and what shows through */}
      <path d="M779 514a288 124 0 0 1 576 0v12a288 124 0 0 1-576 0z" fill="#6389de" stroke={line} />
      <g clipPath="url(#rimDark)"><path d="M779 514a288 124 0 0 0 576 0v13a288 124 0 0 1-576 0z" fill="#1a2c5c" /></g>
      <path d="M779 518a288 124 0 0 0 576 0M779 522a288 124 0 0 0 576 0" fill="none" stroke="#2450b0" />
      <ellipse cx="1067" cy="514" rx="288" ry="124" fill="#84a3ec" stroke={line} />
      <g clipPath="url(#glassClip)">
        <g fill="none">
          <path d="M856 570A283 120 0 0 1 1350 652" stroke="#3f68c0" strokeWidth="10" />
          <path d="M856 570A283 120 0 0 1 1350 652" stroke="#5b82d8" strokeWidth="8" />
          <path d="M870 570A280 119 0 0 1 1348 656" stroke="#4467b2" strokeWidth="2" />
        </g>
        <path d="M1333 480h7v150h-7z" fill="#4467b2" />
        <path d="M847.500 440h11v130l-11 8z" fill="#7396e6" stroke="#5079d4" />
        <path d="M853.500 440v128" stroke="#5079d4" />
        {/* small table under the glass */}
        <path d="M558 585a225 98 0 0 1 450 0v62a225 98 0 0 1-450 0z" fill="#5a88f0" fillOpacity=".93" stroke="#3f6dd8" />
        <g clipPath="url(#topClip)" fill="none">
          <ellipse cx="783" cy="591" rx="221" ry="100" stroke="#6791ef" strokeWidth="6" />
          <ellipse cx="783" cy="643" rx="217" ry="97" stroke="#4770cc" strokeWidth="5" />
          <path d="M847 579C880 560 920 545 980 535" stroke="#507bdc" strokeWidth="6" strokeOpacity=".8" />
          <path d="M852.500 480v92" stroke="#5580e6" strokeWidth="10" strokeOpacity=".6" />
        </g>
        <path d="M842 445h4v132h-4z" fill="#4467b2" />
        <path d="M990.500 612v50M1003 612v40" stroke="#3f6dd8" />
        <g fill="none">
          <path d="M784 522a283 123 0 0 1 566 0" stroke="#4a74cc" strokeWidth="9" />
          <path d="M784 519a283 122 0 0 1 566 0M785 523a282 122 0 0 1 564 0" stroke="#3b66c8" />
          <ellipse cx="1067" cy="514" rx="284" ry="121" stroke="#6c95f0" strokeWidth="7" />
          <ellipse cx="1067" cy="514" rx="281" ry="122" stroke="#2f5cc4" strokeOpacity=".5" />
        </g>
      </g>
      <ellipse cx="1067" cy="514" rx="288" ry="124" fill="none" stroke={line} />
      <path d="M779 516C785 556 830 596 930 622" fill="none" stroke="#0c1a44" strokeWidth="2" />

      {/* front leg */}
      <path d="M1008.500 643h17v134h-17z" fill="#647cb4" stroke={line} />
      <path d="M1025.500 648v126" stroke={line} strokeWidth="2" />
    </svg>
  );
}

const vc = "text-[#444]";
const viewControls = [
  ["Detail Level", <Svg w={16} h={13} className={vc}><path d="M.500.500h15v11H.500z" fill="#ddd" /><path d="M1 1h5v3H1zM10 1h5v3h-5zM5 4h5v4H5zM1 8h5v3H1zM10 8h5v3h-5z" fill="#778" stroke="none" /></Svg>],
  ["Visual Style", <Svg w={16} h={13} className="text-[#1d5f78]"><path d="M.500 5.500l4-4h11l-3 4zM.500 5.500v7h12v-7M12.500 12.500l3-4v-7M3 8.500h7M3 10.500h7" fill="#8fd0e4" /></Svg>],
  ["Sun Path", <Svg w={16} h={14}><circle cx="6" cy="6" r="3.500" fill="#fbe9a0" stroke="#c48b1c" /><path d="M6 0v2M0 6h2M2 2l1 1M10 2L9 3M2 10l1-1" stroke="#c48b1c" /><path d="M8 7l6 6M14 7l-6 6" stroke="#8b1f1f" strokeWidth="2" /></Svg>],
  ["Shadows", <Svg w={12} h={14} className="text-[#27607e]"><circle cx="6" cy="5" r="4" fill="#cdeaf6" /><path d="M2 12.500h8" strokeWidth="2" /></Svg>],
  ["Render", <Svg w={16} h={13} className={vc}><path d="M0 3l4 2 1 6h5M4 5h7" /><circle cx="12" cy="6.500" r="2.500" fill="#cdeaf6" stroke="#27607e" /><path d="M12 9v3" /></Svg>],
  ["Crop View", <Svg w={16} h={13} className="text-[#27607e]"><path d="M0 9.500h4M4.500 12V3.500H14M7.500 12V6.500h6M11 1v4" /><path d="M9 6l6 6M15 6l-6 6" stroke="#8b1f1f" strokeWidth="2" /></Svg>],
  ["Crop Region", <Svg w={16} h={13} className="text-[#27607e]"><path d="M0 9.500h4M4.500 12V3.500H10M7.500 12V6.500h3" /><circle cx="12.500" cy="6" r="2.500" fill="#cdeaf6" /><path d="M12.500 9v3" /></Svg>],
  ["Lock View", <Svg w={15} h={14} className={vc}><path d="M1.500 12V5l5-4 5 2 2 4M1.500 5l4 3v5M5.500 8l4-3" /><path d="M8 9h6v4H8z" fill="#7fb3a5" /></Svg>],
  ["Hide", <Svg w={16} h={12} className={vc}><path d="M1 3c2-3 4-2 5 2M8 6c2-4 6-1 7-5" /><path d="M3 6c1 4 5 4 6 0 1 4 5 3 5-1" /></Svg>],
  ["Reveal", <Svg w={8} h={13} className="text-[#27607e]"><circle cx="4" cy="4.500" r="2.500" fill="#cdeaf6" /><path d="M4 7v4" strokeWidth="2" /></Svg>],
  ["Worksharing", <Svg w={15} h={13} className="text-[#222]"><path d="M1.500 11.500v-9h12M4 .500v3M8 .500v3M11.500.500v3M1 11.500h5" /><path d="M7.500 6.500h6v5h-6z" strokeDasharray="2 1" /></Svg>],
  ["Temporary", <Svg w={16} h={13} className={vc}><path d="M1.500 12V5l4-4h6l-3 4v7M1.500 5h7M4.500 5v7" stroke="#8a4038" /><circle cx="12.500" cy="6" r="2.500" fill="#cdeaf6" stroke="#27607e" /></Svg>],
  ["Analytical", <Svg w={14} h={13} className={vc}><path d="M3.500 4.500h6v8h-6zM3.500 4.500l3-3h6v8l-3 3M1 6v5" /></Svg>],
  ["Constraints", <Svg w={16} h={13} className={vc}><path d="M0 2.500h16M1.500 0v12M14.500 0v6" /><path d="M3 10.500h5" strokeDasharray="1 1" /><path d="M9 8h6v4H9z" fill="#777" /></Svg>],
];

function Grip() {
  return (
    <Svg w={10} h={10} className="text-[#aaa]">
      <path d="M8 0h2v2H8zM4 4h2v2H4zM8 4h2v2H8zM0 8h2v2H0zM4 8h2v2H4zM8 8h2v2H8z" fill="currentColor" stroke="none" />
    </Svg>
  );
}

function Canvas() {
  return (
    <main className="flex min-w-0 flex-1 flex-col border-l-[3px] border-[#c2c2c2]">
      <ViewTabs />
      <div className="flex min-h-0 flex-1 flex-col border-2 border-white bg-[#ededed]">
        <div className="flex min-h-0 flex-1 border-b border-white">
          <div className="min-w-0 flex-1 overflow-hidden border-r border-white">
            <Model />
          </div>
          <div className="w-[16px]" />
        </div>
        <div className="flex h-[17px] items-center pl-[24px]">
          <span className="w-[54px] text-[11px] text-[#222]">1 : 100</span>
          <div className="flex items-center gap-[5px]">
            {viewControls.map(([l, ic]) => (
              <button key={l} aria-label={l} className="flex w-4 justify-center">{ic}</button>
            ))}
          </div>
          <div className="flex flex-1 justify-center">
            <span className="h-[2px] w-4 bg-[#777]" />
          </div>
          <span className="self-end pr-[3px]"><Grip /></span>
        </div>
      </div>
    </main>
  );
}

/* ---------- properties palette ---------- */

function PaletteRow({ children, selected }) {
  return (
    <tr className="h-[18px]">
      <td className="border-b border-dotted border-[#777]" />
      <td className={`pr-[2px] text-right whitespace-nowrap ${selected ? "border border-black" : "border-r border-b border-dotted border-[#777]"}`}>{children}</td>
      <td className="border-r border-b border-dotted border-[#777]" />
    </tr>
  );
}

function PaletteGroup({ title }) {
  return (
    <tr className="h-[18px] bg-[#cdcdcd]">
      <th colSpan="2" className="pl-1 text-left">{title}</th>
      <td><ChevronsUp size={12} strokeWidth={3} className="-ml-px text-black" /></td>
    </tr>
  );
}

function PropertiesPalette() {
  return (
    <aside className="flex w-[220px] shrink-0 flex-col border-l-[3px] border-[#c2c2c2] bg-[#ededed] text-[11px] text-[#333]">
      <h2 className="h-[21px] pl-[3px] leading-[21px]">Properties</h2>
      <div className="flex h-[71px] items-center justify-end border border-[#cfcfcf] bg-[#e9e9e9] pr-[3px]">
        <Caret />
      </div>
      <div className="flex h-[24px] items-center justify-between pr-[8px] pl-[3px]">
        <span>Furniture (1)</span>
        <button>Edit Type</button>
      </div>
      <div className="flex-1 bg-white">
        <table className="w-full table-fixed border-separate border-spacing-0 leading-[16px]">
          <colgroup>
            <col className="w-[100px]" />
            <col />
            <col className="w-[14px]" />
          </colgroup>
          <tbody>
            <PaletteGroup title="Constraints" />
            <PaletteRow selected />
            <PaletteRow />
            <PaletteRow><span className="mr-[6px] text-[#888]">Level : Level 1</span></PaletteRow>
            <PaletteRow />
            <PaletteRow />
            <PaletteGroup title="Identity Data" />
            <PaletteRow />
            <PaletteRow />
            <PaletteRow />
            <PaletteGroup title="Phasing" />
            <PaletteRow>New Constru...</PaletteRow>
            <PaletteRow />
          </tbody>
        </table>
      </div>
      <div className="flex h-[27px] items-center justify-between bg-[#ededed] pr-[3px] pl-[3px]">
        <a href="#help" className="text-[#2c6694] underline">Properties help</a>
        <button disabled className="h-[20px] w-[71px] rounded-[3px] bg-[#f7f7f7] text-[#8f8f8f]">Apply</button>
      </div>
    </aside>
  );
}

/* ---------- type properties dialog ---------- */

const groups = [
  ["Constraints", [["Default Elevation", "0.0"]]],
  ["Construction", [["Object Scale", "374.0"]]],
  ["Materials and Finishes", [["Marble", "Glossy"], ["Metal", "Metal - Chrome"], ["Wood", "EA-Wood Interior"]]],
  ["Identity Data", [["Type Image", ""], ["Keynote", ""], ["Model", ""], ["Manufacturer", ""], ["Type Comments", ""], ["URL", ""], ["Description", ""], ["Assembly Code", ""], ["Cost", ""], ["Assembly Description", ""]]],
];

function Field({ id, label }) {
  return (
    <div className="flex items-center">
      <label htmlFor={id} className="w-[69px]">{label}</label>
      <div className="relative flex-1">
        <select id={id} className="h-[20px] w-full appearance-none rounded-[2px] border border-[#cfcfcf] bg-[#fdfdfd] pl-[3px] text-[11px] leading-[18px]">
          <option>Table-MDR-09</option>
        </select>
        <ChevronDown size={11} className="pointer-events-none absolute top-[5px] right-[3px] text-[#777]" />
      </div>
    </div>
  );
}

function TypeTable() {
  const dot = "border-dotted border-[#555]";
  return (
    <div className="flex h-[375px] overflow-hidden border-t border-l border-[#777]">
      <table className="flex-1 table-fixed border-separate border-spacing-0 self-start bg-white">
        <colgroup>
          <col className="w-[212px]" />
          <col />
          <col className="w-[12px]" />
        </colgroup>
        <thead className="bg-[#f0f0f0]">
          <tr className="h-[22px]">
            <th className="border-r border-b border-black font-normal">Parameter</th>
            <th className="border-r border-b border-black font-normal">Value</th>
            <th className="border-r border-b border-black font-normal text-black">=</th>
          </tr>
        </thead>
        {groups.map(([name, rows]) => (
          <tbody key={name}>
            <tr className="h-[3px]"><td colSpan="3" /></tr>
            <tr className="h-[19px] bg-[#99b3d0]">
              <th colSpan="2" className="pb-[2px] pl-[3px] text-left leading-[16px] font-bold text-[#0d1726]">{name}</th>
              <td><button aria-label={`Collapse ${name}`} className="flex"><ChevronsUp size={12} strokeWidth={3} className="-ml-1" /></button></td>
            </tr>
            {rows.map(([k, v]) => {
              const dim = k === "Type Image" || k === "Assembly Description";
              return (
                <tr key={k} className={`h-[18px] leading-[16px] ${dim ? "text-[#777]" : ""}`}>
                  <td className={`border-r border-b pb-px pl-[3px] ${dot}`}>{k}</td>
                  <td className={v === "0.0" ? "border border-black" : `border-r border-b ${dot}`}>
                    <input aria-label={k} defaultValue={v} className="block h-[16px] w-full bg-transparent pb-px pl-[2px] outline-none" />
                  </td>
                  <td className={`border-r border-b ${dot}`}>
                    {!dim && <button aria-label={`Associate ${k}`} className="ml-[2px] block h-[14px] w-[8px] rounded-[3px] border border-[#c8c8c8]" />}
                  </td>
                </tr>
              );
            })}
          </tbody>
        ))}
      </table>
      <div className="flex w-[19px] justify-center pt-[18px]">
        <span className="h-[242px] w-[2px] bg-[#888]" />
      </div>
    </div>
  );
}

function TypeProperties() {
  const btn = "h-[22px] rounded-[4px] border border-[#cfcfcf] bg-[#fdfdfd]";
  return (
    <div role="dialog" aria-label="Type Properties" className="absolute top-[4px] right-[28px] w-[508px] rounded-[8px] border border-[#a8a8a8] bg-[#f0f0f0] text-[11px] text-[#1a1a1a] shadow-[0_18px_40px_4px_rgba(0,0,0,0.42)]">
      <div className="flex h-[29px] items-center justify-between rounded-t-[8px] bg-[#f0f3fa] pr-[7px] pl-[8px]">
        <h2>Type Properties</h2>
        <button aria-label="Close dialog"><X size={15} strokeWidth={1.5} /></button>
      </div>
      <div className="pr-[13px] pl-[20px]">
        <div className="flex gap-[14px] pt-[11px] text-[11px]">
          <div className="flex flex-1 flex-col gap-[13px]">
            <Field id="family" label="Family:" />
            <Field id="type" label="Type:" />
          </div>
          <div className="flex w-[106px] flex-col gap-[9px] pt-px">
            <button className={btn}>Load...</button>
            <button className={btn}>Duplicate...</button>
            <button className={btn}>Rename...</button>
          </div>
        </div>
        <h3 className="mt-[7px] mb-[5px] leading-[16px]">Type Parameters</h3>
        <TypeTable />
        <a href="#what" className="mt-[12px] inline-block leading-[16px] text-[#2c6694] underline">What do these properties do?</a>
        <div className="mt-[16px] mb-[12px] flex gap-[8px]">
          <button className={`${btn} mr-auto w-[88px]`}>&lt;&lt; Preview</button>
          <button className="h-[22px] w-[88px] rounded-[4px] border border-[#2c6694] bg-[#fdfdfd]">OK</button>
          <button className={`${btn} w-[88px]`}>Cancel</button>
          <button disabled className="h-[22px] w-[87px] rounded-[4px] bg-[#f7f7f7] text-[#8f8f8f]">Apply</button>
        </div>
      </div>
      <span className="absolute right-[2px] bottom-[2px]"><Grip /></span>

      {/* red markup */}
      <svg width="508" height="609" viewBox="1384 4 508 609" className="pointer-events-none absolute -top-px -left-px overflow-visible" fill="none" stroke="#c4303a" strokeWidth="5">
        <rect x="1406" y="221" width="450" height="121" />
        <path d="M1408 289C1375 308 1330 330 1304 352C1275 378 1250 415 1222 452" strokeLinecap="round" />
      </svg>
    </div>
  );
}

/* ---------- status bar ---------- */

function StatusSelect({ label, value }) {
  return (
    <div className="relative w-[204px]">
      <select aria-label={label} className="block h-[18px] w-full appearance-none bg-white pl-[3px] text-[12px] leading-[18px] text-[#8a8a8a]">
        <option>{value}</option>
      </select>
      <ChevronDown size={11} className="pointer-events-none absolute top-[4px] right-[2px] text-[#aaa]" />
    </div>
  );
}

function StatusBar() {
  return (
    <footer className="flex h-6 items-center bg-[#cbcbcb] pt-px text-[11px] text-[#111]">
      <span className="flex-1 pl-[2px]">Ready</span>
      <div className="flex items-center text-[#999]">
        <Svg w={15} h={16}>
          <circle cx="7.500" cy="3" r="2.500" fill="#a5a5a5" />
          <path d="M1 15V8l2-2 2 2v7zM6 15V7h3v8zM10 15V8l2-2 2 2v7z" fill="#a5a5a5" />
          <path d="M5.500 6v9M9.500 6v9" stroke="#eee" strokeDasharray="2 1" />
        </Svg>
        <span className="w-[8px]" />
        <StatusSelect label="Worksets" value="" />
        <span className="w-[10px]" />
        <Svg w={15} h={16}>
          <path d="M4 1h10v5h-5l-2 3V6H4zM1 15l4-5 5 1-3 4z" fill="#a5a5a5" />
          <path d="M5 2h8v3H5z" fill="#ddd" stroke="none" />
        </Svg>
        <span className="w-[37px] pl-[4px] text-[#222]">:0</span>
        <Svg w={16}><rect width="16" height="16" rx="2" fill="#a2a2a2" stroke="none" /></Svg>
        <Svg w={16} className="ml-[10px]"><path d="M1 1h14v14h-8l-3-4-3 3z" fill="#a2a2a2" stroke="none" /><path d="M2 5l6 6v-4M8 11H4" stroke="#eee" /></Svg>
        <span className="w-[8px]" />
        <StatusSelect label="Design option" value="Main Model" />
      </div>
      <div className="flex flex-[0_0_480px] items-center justify-end gap-[10px] pr-[73px] text-[#9a9a9a]">
        <Svg w={16}><path d="M1 5c0-4 6-4 7-1 1-3 7-3 7 1 0 3-3 3-4 3v6H6V8C4 8 1 8 1 5z" fill="#9a9a9a" /><path d="M3 4.500h3M10 4.500h3" stroke="#eee" /></Svg>
        <Svg w={16}><path d="M0 13c4-6 8-9 14-11v12l-3-3-1 4z" fill="#9c9c9c" stroke="none" /><path d="M15 2v13" stroke="#eee" strokeDasharray="2 1" /></Svg>
        <Svg w={16}><path d="M1 1h9v6l5 6-3 1-4-3H1l3-4H1z" fill="#9a9a9a" stroke="none" /><path d="M10 7l5 6M9 15v-4" stroke="#eee" strokeDasharray="2 1" /></Svg>
        <Svg w={15} h={16}><path d="M2 1h8v7l4 5-3 2-2-2H1z" fill="#9c9c9c" stroke="none" /><path d="M10 7l5 6M9 15v-3" stroke="#eee" strokeDasharray="2 1" /></Svg>
        <Svg w={16}><path d="M5 0v10M0 5h10" strokeDasharray="2 1" stroke="#888" /><path d="M8 6l7 7h-4l-2 2z" fill="#a2a2a2" stroke="#eee" /></Svg>
        <Svg w={14}><circle cx="7" cy="7" r="5" strokeWidth="3" strokeDasharray="3 1" /></Svg>
        <span className="flex items-center text-[#333]">
          <Svg w={16} className="text-[#444]"><path d="M.500 1.500h15l-6 7v6l-3-2v-4z" fill="#a9c0d0" /></Svg>
          :1
        </span>
      </div>
    </footer>
  );
}

/* ---------- taskbar ---------- */

function AppTile({ bg, fg, text, border, sub }) {
  return (
    <svg width="24" height="24" viewBox="0 0 24 24" aria-hidden="true">
      <rect x="1" y="1" width="22" height="22" rx={border ? 0 : 4} fill={bg} stroke={border || "none"} strokeWidth="2" />
      {sub && <rect x="3" y="17" width="20" height="7" fill="#0006" />}
      <text x="12" y={sub ? 14 : 17} textAnchor="middle" fontSize={text.length > 2 ? 11 : sub ? 14 : 12} fontWeight="700" fill={fg}>{text}</text>
      {sub && <text x="12" y="23" textAnchor="middle" fontSize="6" fontWeight="700" fill="#fff">{sub}</text>}
    </svg>
  );
}

const apps = [
  ["Task View", <svg width="24" height="22" viewBox="0 0 24 22"><rect x="6" width="18" height="16" fill="#f2f2f2" /><rect y="6" width="18" height="16" fill="#777" fillOpacity=".85" /></svg>],
  [
    "Weather",
    <svg width="32" height="24" viewBox="0 0 32 24" className="overflow-visible">
      <path d="M5 20a5 5 0 0 1 0-8 6 6 0 0 1 11-4 6 6 0 0 1 7 4 4 4 0 0 1 0 8z" fill="#a9c4f0" />
      <rect x="13" y="-5" width="21" height="15" rx="7" fill="#252a33" />
      <text x="24" y="7" textAnchor="middle" fontSize="11" fill="#fff">46°</text>
    </svg>,
  ],
  ["Chat", <svg width="24" height="24" viewBox="0 0 24 24"><path d="M12 0a11.500 11.500 0 1 1-5 22l-6 1 1-6A11.500 11.500 0 0 1 12 0z" fill="#6f62c4" /><rect x="5" y="7" width="9" height="10" rx="1" fill="#fff" /><path d="M15 11l4-3v8l-4-3z" fill="#fff" /></svg>],
  ["Monitor", <svg width="25" height="20" viewBox="0 0 25 20"><rect width="25" height="20" fill="#dbeaf3" /><path d="M2 17v-5l2-2 2 4 2-4 2 4 2-10 2 9 2-4 2 5 2-7 3 6v4z" fill="#3d86b4" /></svg>],
  ["Lightroom Classic", <AppTile bg="#0b2233" fg="#9fc9f5" text="Lrc" />],
  [
    "Edge",
    <svg width="25" height="25" viewBox="0 0 25 25">
      <circle cx="12.500" cy="12.500" r="12" fill="#1b77d0" />
      <path d="M3 6A12 12 0 0 1 24.500 12c0 5-6 6-9 4 2-3 0-7-4-7-4-1-7-1-8.500-3z" fill="#4fd07a" />
      <path d="M1 11C4 1 14 -1 19 3c-2 4-8 5-11 6-3 0-5 1-7 2z" fill="#38b6e0" />
      <path d="M9 10c-4 6 0 12 7 13C8 26 0 21 1 13c2-3 5-4 8-3z" fill="#1259a8" />
    </svg>,
  ],
  ["Spotify", <svg width="24" height="24" viewBox="0 0 24 24" fill="none" stroke="#111" strokeWidth="2.200" strokeLinecap="round"><circle cx="12" cy="12" r="12" fill="#1ed05f" stroke="none" /><path d="M5 8c5-1.500 10-1 14 1.500M6 12c4-1 8-1 12 1.500M7 16c3-1 6.500-.500 9.500 1" /></svg>, "dot"],
  ["Premiere Pro", <AppTile bg="#2b0a3d" fg="#d9a0ff" text="Pr" border="#c58af5" />],
  ["Earth Pro", <svg width="24" height="24" viewBox="0 0 24 24"><circle cx="12" cy="12" r="11.500" fill="#b9bdc3" /><path d="M1 8c8-4 15 0 22 8M3 5c8-2 15 2 20 7M7 2c6 0 12 4 15 7" stroke="#555" strokeWidth="1.500" fill="none" /><rect x="6" y="17" width="12" height="7" rx="2" fill="#333" /><text x="12" y="23" textAnchor="middle" fontSize="6" fill="#fff">Pro</text></svg>],
  ["Lumion 12", <svg width="24" height="24" viewBox="0 0 24 24"><rect x=".5" y=".5" width="23" height="23" fill="#3f7c92" stroke="#dfe9ee" /><path d="M2 3c6 1 7 8 20 11M11 8c0-4 3-6 6-6-1 4-3 6-6 6M16 10c1-4 3-5 6-4" stroke="#e9f3f6" strokeWidth="1.500" fill="none" /><text x="11" y="22" textAnchor="middle" fontSize="9" fontWeight="700" fill="#fff">12</text></svg>],
  ["Opera", <svg width="24" height="24" viewBox="0 0 24 24"><circle cx="12" cy="12" r="12" fill="#d8152f" /><path d="M12 0a12 12 0 0 1 0 24c6-3 6-21 0-24z" fill="#9c0f22" /><ellipse cx="12" cy="12" rx="5" ry="9" fill="#141a55" /></svg>, "dot"],
  ["Media Player", <svg width="22" height="20" viewBox="0 0 22 20"><rect x="4" y="1" width="17" height="18" fill="#6fa8cf" /><rect x="1" y="1" width="17" height="18" fill="#b7c9d3" /><circle cx="9.500" cy="10" r="7" fill="#e0a35a" /><path d="M7 5.500l7 4.500-7 4.500z" fill="#fff" /></svg>],
  ["After Effects", <AppTile bg="#0a0452" fg="#b7a5ff" text="Ae" />],
  ["File Explorer", <svg width="25" height="22" viewBox="0 0 25 22"><path d="M0 1a1 1 0 0 1 1-1h8l3 3h13v4H0z" fill="#e0a021" /><path d="M0 5h25v16H0z" fill="#fbd05a" /><path d="M5 21v-4a2 2 0 0 1 2-2h11a2 2 0 0 1 2 2v4z" fill="#2e7fb0" /></svg>, "dot"],
  ["Revit", <svg width="25" height="25" viewBox="0 0 25 25"><rect width="25" height="25" fill="#e6eef7" /><path d="M6 3h8c5 0 6 8 1 10l5 9h-5l-4-8h-1v8H6z" fill="#3a6ea8" /><path d="M10 6h4c3 0 3 5 0 5h-4z" fill="#e6eef7" /><path d="M4 5l5-2v17l-4 2z" fill="#26507f" /></svg>, "active"],
  ["AutoCAD", <AppTile bg="#d3164e" fg="#fff" text="A" sub="CAD" />],
  ["3ds Max", <AppTile bg="#37a5be" fg="#fff" text="3" sub="MAX" />],
  ["Photoshop", <AppTile bg="#0b2230" fg="#4fc3ea" text="Ps" border="#3a9fc0" />],
  ["Word", <svg width="25" height="24" viewBox="0 0 25 24"><rect x="6" y="1" width="19" height="22" rx="1" fill="#2f7bd3" /><path d="M6 1h19v6H6z" fill="#4aa3ee" /><path d="M6 17h19v6H6z" fill="#1a4d9a" /><rect y="6" width="14" height="13" rx="1" fill="#1c4fa3" /><text x="7" y="16" textAnchor="middle" fontSize="10" fontWeight="700" fill="#fff">W</text></svg>],
  ["3ds Max 2", <AppTile bg="#37a5be" fg="#fff" text="3" sub="MAX" />],
  ["Paint", <svg width="24" height="24" viewBox="0 0 24 24"><path d="M12 1c7 0 11 4 10 10-1 3-6 1-7 4s2 7-3 8C5 24 1 18 1 12S6 1 12 1z" fill="#59bfe8" /><path d="M12 1c5 0 10 3 10 8l-8 3z" fill="#2c79c0" /><circle cx="8" cy="6" r="2" fill="#57c05a" /><circle cx="4.500" cy="12" r="2" fill="#1c5ca0" /><circle cx="14" cy="5" r="2" fill="#f2c744" /><circle cx="8" cy="17" r="2" fill="#d95b4a" /><path d="M16 9l5-1v5l-2 9-2-1z" fill="#c08a52" /></svg>, "dot"],
];

function Taskbar() {
  return (
    <div className="flex h-12 items-center bg-[linear-gradient(90deg,#1b222c_0%,#1b222c_17%,#10205a_22%,#132058_36%,#15175f_42%,#132058_50%,#1a1c3f_57%,#0f1f60_64%,#191c3c_75%,#1c222c_83%,#1c222c_100%)] text-white">
      <button aria-label="Start" className="ml-[21px]">
        <svg width="23" height="23" viewBox="0 0 23 23" fill="#4cc0f5">
          <path d="M0 0h11v11H0z" fill="#74d6f8" />
          <path d="M12 0h11v11H12zM0 12h11v11H0z" />
          <path d="M12 12h11v11H12z" fill="#2f9ff0" />
        </svg>
      </button>
      <label className="ml-[13px] flex h-8 w-[220px] items-center overflow-hidden rounded-full border border-[#4b515b] bg-[#3a404a] pl-[11px]">
        <Search size={15} strokeWidth={2.5} />
        <input aria-label="Search" placeholder="Search" className="ml-[10px] w-[120px] min-w-0 bg-transparent text-[13px] outline-none placeholder:text-[#d0d3d8]" />
        <svg width="50" height="26" viewBox="0 0 50 26" className="ml-auto" aria-hidden="true">
          <path d="M18 20c2-9 8-9 10-12 5 1 7-5 12-5 6 0 8 4 8 10s-2 9-8 10H18z" fill="#e0a040" />
          <path d="M34 8v14M38 6v16M42 5v17M46 7v13" stroke="#b96f2a" />
          <path d="M27 2v10M25 9h4M5 12v8M20 13l6 1M22 17l12-4" stroke="#d99ab0" strokeWidth="2" />
          <path d="M1 22c10-4 25-3 46-1l-6 4H6z" fill="#2f9cc0" />
        </svg>
      </label>
      <div className="ml-[2px] flex">
        {apps.map(([name, icon, state]) => (
          <button key={name} aria-label={name} className={`relative flex h-10 w-[44px] items-center justify-center ${state === "active" ? "rounded-[4px] bg-white/10" : ""}`}>
            {icon}
            {state === "dot" && <span className="absolute -bottom-px h-[3px] w-[6px] rounded-full bg-[#9aa0b5]" />}
            {state === "active" && <span className="absolute -bottom-px h-[3px] w-4 rounded-full bg-[#6ab4f0]" />}
          </button>
        ))}
      </div>
      <div className="ml-auto flex items-center pr-[20px] text-[12px]">
        <button aria-label="Show hidden icons"><ChevronUp size={15} strokeWidth={2.5} /></button>
        <span className="ml-[19px]">ENG</span>
        <Wifi size={17} className="ml-[19px]" />
        <Volume2 size={16} className="ml-[7px]" />
        <Svg w={17} h={14} className="ml-[8px]">
          <rect x="3" y="3" width="12" height="9" rx="2" fill="#fff" />
          <path d="M16 6v3" strokeWidth="2" />
          <path d="M4 0L1 5h3L3 9" stroke="#fff" strokeWidth="1.500" />
        </Svg>
        <div className="ml-[14px] text-right leading-4">
          <div>5:47 PM</div>
          <div>1/9/2024</div>
        </div>
        <span className="ml-[8px] flex h-4 w-4 items-center justify-center rounded-full bg-[#4cb4f0] text-[10px] text-[#123]">3</span>
      </div>
    </div>
  );
}

export default function App() {
  return (
    <div className="relative flex h-screen flex-col overflow-hidden bg-[#cbcbcb] font-['Open_Sans','Noto_Sans',sans-serif]">
      <TitleBar />
      <RibbonTabs />
      <Ribbon />
      <OptionsBar />
      <div className="flex min-h-0 flex-1 border-t border-[#cacaca]">
        <ProjectBrowser />
        <Canvas />
        <PropertiesPalette />
      </div>
      <StatusBar />
      <Taskbar />
      <TypeProperties />
    </div>
  );
}
